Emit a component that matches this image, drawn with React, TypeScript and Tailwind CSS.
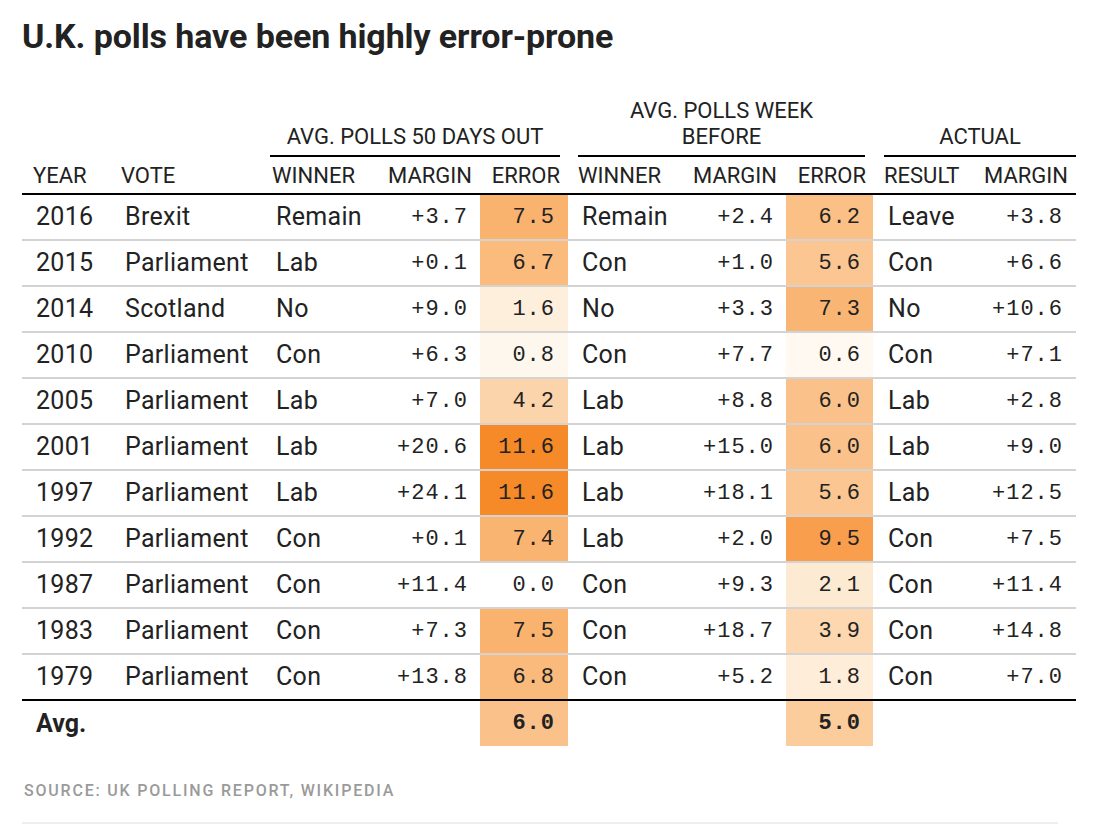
import React from "react";

type Row = [string, string, string, string, number, string, string, number, string, string];

const data: Row[] = [
  ["2016", "Brexit", "Remain", "+3.7", 7.5, "Remain", "+2.4", 6.2, "Leave", "+3.8"],
  ["2015", "Parliament", "Lab", "+0.1", 6.7, "Con", "+1.0", 5.6, "Con", "+6.6"],
  ["2014", "Scotland", "No", "+9.0", 1.6, "No", "+3.3", 7.3, "No", "+10.6"],
  ["2010", "Parliament", "Con", "+6.3", 0.8, "Con", "+7.7", 0.6, "Con", "+7.1"],
  ["2005", "Parliament", "Lab", "+7.0", 4.2, "Lab", "+8.8", 6.0, "Lab", "+2.8"],
  ["2001", "Parliament", "Lab", "+20.6", 11.6, "Lab", "+15.0", 6.0, "Lab", "+9.0"],
  ["1997", "Parliament", "Lab", "+24.1", 11.6, "Lab", "+18.1", 5.6, "Lab", "+12.5"],
  ["1992", "Parliament", "Con", "+0.1", 7.4, "Lab", "+2.0", 9.5, "Con", "+7.5"],
  ["1987", "Parliament", "Con", "+11.4", 0.0, "Con", "+9.3", 2.1, "Con", "+11.4"],
  ["1983", "Parliament", "Con", "+7.3", 7.5, "Con", "+18.7", 3.9, "Con", "+14.8"],
  ["1979", "Parliament", "Con", "+13.8", 6.8, "Con", "+5.2", 1.8, "Con", "+7.0"],
];

function heat(v: number): string {
  const t = Math.max(0, Math.min(1, v / 11.6));
  const r = Math.round(255 - (255 - 246) * t);
  const g = Math.round(255 - (255 - 137) * t);
  const b = Math.round(255 - (255 - 40) * Math.pow(t, 0.92));
  return `rgb(${r},${g},${b})`;
}

const GRID =
  "grid grid-cols-[95px_151px_104px_108px_88px_104px_114px_87px_95px_108px]";

const sans = "font-['Roboto','Liberation_Sans',sans-serif]";
const mono = "font-['Liberation_Mono','DejaVu_Sans_Mono',monospace]";
const num = `${mono} text-[22px] tracking-[1px] flex items-center justify-end`;

export default function App() {
  return (
    <div className={`w-[1096px] h-[828px] bg-white text-[#222] ${sans} px-[22px] pt-[16px] overflow-hidden`}>
      <h1 className="text-[34px] leading-[40px] font-bold tracking-[-0.1px] text-[#222]">
        U.K. polls have been highly error-prone
      </h1>

      <div className="w-[1054px] mt-[42px]">
        {/* group headers */}
        <div className={`${GRID} items-end text-[22px] leading-[26px] text-[#222]`}>
          <div className="col-span-2" />
          <div className="col-span-3 ml-[2px] mr-[8px] border-b-2 border-black pb-[5px] text-center">
            AVG. POLLS 50 DAYS OUT
          </div>
          <div className="col-span-3 ml-[10px] mr-[8px] border-b-2 border-black pb-[5px] text-center">
            AVG. POLLS WEEK
            <br />
            BEFORE
          </div>
          <div className="col-span-2 ml-[11px] border-b-2 border-black pb-[5px] text-center">
            ACTUAL
          </div>
        </div>

        {/* column headers */}
        <div className={`${GRID} h-[38px] items-center border-b-2 border-black text-[22px] text-[#222]`}>
          <div className="pl-[11px]">YEAR</div>
          <div className="pl-[4px]">VOTE</div>
          <div className="pl-[4px]">WINNER</div>
          <div className="text-right pr-[8px]">MARGIN</div>
          <div className="text-right pr-[8px]">ERROR</div>
          <div className="pl-[10px]">WINNER</div>
          <div className="text-right pr-[9px]">MARGIN</div>
          <div className="text-right pr-[7px]">ERROR</div>
          <div className="pl-[11px]">RESULT</div>
          <div className="text-right pr-[8px]">MARGIN</div>
        </div>

        {/* body */}
        {data.map((r, i) => {
          const last = i === data.length - 1;
          const line = last ? "border-black" : "border-[#d3d3d3]";
          return (
            <div key={r[0]} className={`${GRID} h-[46px] border-b-2 ${line} text-[25px] tracking-[0.3px]`}>
              <div className="pl-[14px] flex items-center">{r[0]}</div>
              <div className="pl-[8px] flex items-center">{r[1]}</div>
              <div className="pl-[8px] flex items-center">{r[2]}</div>
              <div className={`${num} pr-[12px]`}>{r[3]}</div>
              <div className={`${num} pr-[13px]`} style={{ backgroundColor: heat(r[4]) }}>
                {r[4].toFixed(1)}
              </div>
              <div className="pl-[14px] flex items-center">{r[5]}</div>
              <div className={`${num} pr-[12px]`}>{r[6]}</div>
              <div className={`${num} pr-[12px]`} style={{ backgroundColor: heat(r[7]) }}>
                {r[7].toFixed(1)}
              </div>
              <div className="pl-[15px] flex items-center">{r[8]}</div>
              <div className={`${num} pr-[13px]`}>{r[9]}</div>
            </div>
          );
        })}

        {/* average */}
        <div className={`${GRID} h-[45px] text-[25px]`}>
          <div className="col-span-4 pl-[14px] flex items-center font-bold">Avg.</div>
          <div className={`${num} font-bold pr-[13px]`} style={{ backgroundColor: heat(6.0) }}>
            6.0
          </div>
          <div className="col-span-2" />
          <div className={`${num} font-bold pr-[12px]`} style={{ backgroundColor: heat(5.0) }}>
            5.0
          </div>
          <div className="col-span-2" />
        </div>
      </div>

      <div className="mt-[35px] text-[16px] leading-[20px] font-medium tracking-[1.8px] text-[#9a9a9a] pl-[2px]">
        SOURCE: UK POLLING REPORT, WIKIPEDIA
      </div>
      <div className="mt-[21px] w-[1036px] h-[2px] bg-[#eeeeee]" />
    </div>
  );
}
